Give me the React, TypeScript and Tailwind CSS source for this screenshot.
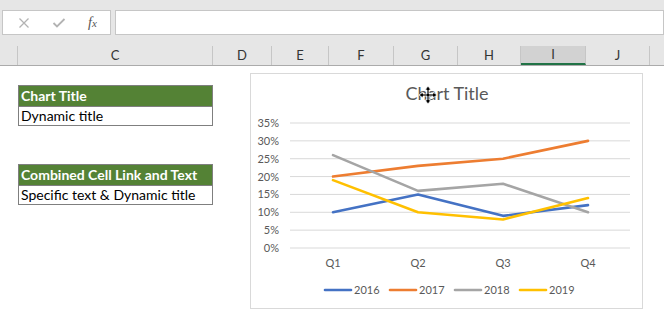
const cols = [
  { name: "C", w: 195 },
  { name: "D", w: 59 },
  { name: "E", w: 57 },
  { name: "F", w: 65 },
  { name: "G", w: 64 },
  { name: "H", w: 63 },
  { name: "I", w: 65, active: true },
  { name: "J", w: 64 },
];

const series = [
  { year: "2016", color: "#4472c4", data: [10, 15, 9, 12] },
  { year: "2017", color: "#ed7d31", data: [20, 23, 25, 30] },
  { year: "2018", color: "#a5a5a5", data: [26, 16, 18, 10] },
  { year: "2019", color: "#ffc000", data: [19, 10, 8, 14] },
];

const xs = [82, 167, 252, 337];
const y0 = 174;
const step = 125 / 35;
const yOf = (v: number) => y0 - v * step;

function Chart() {
  return (
    <div className="absolute left-[250px] top-[73px] w-[393px] h-[236px] bg-white border border-[#d9d9d9]">
      <svg width="393" height="236" className="block" style={{ fontFamily: "Lato, 'Open Sans', sans-serif" }}>
        <text x="196" y="26" textAnchor="middle" fontSize="18" fill="#595959">Chart Title</text>
        {[0, 5, 10, 15, 20, 25, 30, 35].map((v) => (
          <g key={v}>
            <line x1="39" x2="379" y1={yOf(v)} y2={yOf(v)} stroke="#d9d9d9" strokeWidth="1" />
            <text x="28" y={yOf(v) + 4} textAnchor="end" fontSize="11" fill="#595959">{v}%</text>
          </g>
        ))}
        {["Q1", "Q2", "Q3", "Q4"].map((q, i) => (
          <text key={q} x={xs[i]} y="193" textAnchor="middle" fontSize="11" fill="#595959">{q}</text>
        ))}
        {series.map((s) => (
          <polyline
            key={s.year}
            points={s.data.map((v, i) => `${xs[i]},${yOf(v)}`).join(" ")}
            fill="none"
            stroke={s.color}
            strokeWidth="2.6"
            strokeLinejoin="round"
            strokeLinecap="round"
          />
        ))}
        {series.map((s, i) => {
          const lx = 74 + i * 65;
          return (
            <g key={s.year}>
              <line x1={lx} x2={lx + 26} y1="216" y2="216" stroke={s.color} strokeWidth="2.6" strokeLinecap="round" />
              <text x={lx + 29} y="220" fontSize="11" fill="#595959">{s.year}</text>
            </g>
          );
        })}
        {/* move cursor */}
        <g transform="translate(177,21)" stroke="#fff" strokeWidth="0.8">
          <path d="M0,-9 L-3,-5 L-1,-5 L-1,-1 L-5,-1 L-5,-3 L-9,0 L-5,3 L-5,1 L-1,1 L-1,5 L-3,5 L0,9 L3,5 L1,5 L1,1 L5,1 L5,3 L9,0 L5,-3 L5,-1 L1,-1 L1,-5 L3,-5 Z" fill="#000" />
        </g>
      </svg>
    </div>
  );
}

export default function App() {
  return (
    <div className="relative w-[664px] h-[316px] bg-white overflow-hidden" style={{ fontFamily: "Lato, 'Noto Sans', sans-serif" }}>
      <div className="h-[45px] bg-[#e6e6e6] pt-[10px] flex">
        <div className="ml-[2px] w-[109px] h-[25px] bg-white border border-[#c6c6c6] flex items-center text-[#b3b3b3]">
          <svg width="12" height="12" viewBox="0 0 12 12" className="ml-[15px]">
            <path d="M1.5 1.5 L10.5 10.5 M10.5 1.5 L1.5 10.5" stroke="#b3b3b3" strokeWidth="1.3" />
          </svg>
          <svg width="14" height="12" viewBox="0 0 14 12" className="ml-[22px]">
            <path d="M1.5 6 L5 9.5 L12.5 2" stroke="#b3b3b3" strokeWidth="1.8" fill="none" />
          </svg>
          <span className="ml-[22px] text-[14px] italic text-[#555]" style={{ fontFamily: "'Liberation Serif', serif" }}>
            f<span className="text-[11px]">x</span>
          </span>
        </div>
        <div className="ml-[4px] flex-1 h-[25px] bg-white border border-[#c6c6c6]" />
      </div>
      <div className="h-[21px] bg-[#e6e6e6] flex border-b border-[#ababab]">
        <div className="w-[18px] shrink-0 border-r border-[#c6c6c6] mt-[1px]" />
        {cols.map((c) => (
          <div
            key={c.name}
            style={{ width: c.w }}
            className={`shrink-0 flex items-center justify-center text-[13px] text-[#333] border-r border-[#c6c6c6] ${c.active ? "bg-[#d2d2d2] border-b-2 border-b-[#217346] mt-[1px]" : "mt-[1px]"}`}
          >
            {c.name}
          </div>
        ))}
        <div className="flex-1" />
      </div>
      <div className="flex">
        <div className="w-[18px] shrink-0" />
        <div className="w-[195px] shrink-0 pt-[19px] text-[14px] leading-none">
          <div className="border border-[#7f7f7f]">
            <div className="h-[20px] bg-[#548235] text-white font-bold flex items-center px-[2px]">Chart Title</div>
            <div className="h-[19px] bg-white text-black flex items-center px-[2px] border-t border-[#7f7f7f]">Dynamic title</div>
          </div>
          <div className="border border-[#7f7f7f] mt-[38px]">
            <div className="h-[20px] bg-[#548235] text-white font-bold flex items-center px-[2px]">Combined Cell Link and Text</div>
            <div className="h-[19px] bg-white text-black flex items-center px-[2px] border-t border-[#7f7f7f]">Specific text &amp; Dynamic title</div>
          </div>
        </div>
      </div>
      <Chart />
    </div>
  );
}
